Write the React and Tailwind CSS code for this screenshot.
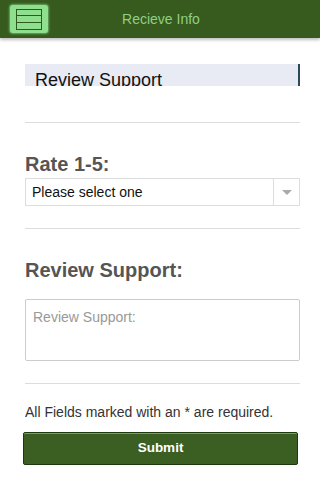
import React from "react";

export default function App() {
  return (
    <div className="w-[320px] h-[480px] bg-white overflow-hidden" style={{ fontFamily: '"Liberation Sans", Arial, sans-serif' }}>
      <div className="relative h-[38px] bg-[#375b1f] flex items-center justify-center shadow-[0_2px_3px_rgba(0,0,0,0.25)]">
        <div className="absolute left-[10px] top-[5px] w-[38px] h-[28px] rounded-[3px] bg-[#8ee08e] shadow-[0_0_2px_1px_rgba(142,224,142,0.6)] flex flex-col items-center justify-center">
          <div className="w-[26px] h-[7px] border-[1.5px] border-[#2f5a1f]" />
          <div className="w-[26px] h-[7px] border-x-[1.5px] border-b-[1.5px] border-[#2f5a1f]" />
          <div className="w-[26px] h-[7px] border-x-[1.5px] border-b-[1.5px] border-[#2f5a1f]" />
        </div>
        <span className="text-[14px] text-[#8fcf84] ml-[2px]">Recieve Info</span>
      </div>

      <div className="ml-[25px] w-[275px] flex flex-col">
        <div className="mt-[26px] h-[22px] bg-[#e8ebf3] border-r-2 border-[#2c4a5a] overflow-hidden pl-[10px] pt-[6px]">
          <div className="text-[18px] leading-[21px] text-[#111]">Review Support</div>
        </div>
        <div className="mt-[36px] h-px bg-[#dcdcdc]" />

        <div className="mt-[30px] text-[20px] leading-[22px] font-bold text-[#555]">Rate 1-5:</div>
        <div className="mt-[3px] h-[28px] border border-[#ddd] flex items-center">
          <span className="flex-1 pl-[6px] text-[14px] text-[#111]">Please select one</span>
          <div className="w-[26px] h-full border-l border-[#ddd] flex items-center justify-center">
            <div className="w-0 h-0 border-l-[5px] border-r-[5px] border-t-[5px] border-l-transparent border-r-transparent border-t-[#aaa]" />
          </div>
        </div>
        <div className="mt-[22px] h-px bg-[#dcdcdc]" />

        <div className="mt-[30px] text-[20px] leading-[22px] font-bold text-[#555]">Review Support:</div>
        <div className="mt-[18px] h-[62px] border border-[#ccc] rounded-[2px] px-[7px] pt-[5px]">
          <span className="text-[14px] text-[#999]">Review Support:</span>
        </div>
        <div className="mt-[22px] h-px bg-[#dcdcdc]" />

        <div className="mt-[20px] text-[14px] leading-[16px] text-[#333]">All Fields marked with an * are required.</div>
      </div>
      <div className="ml-[23px] mt-[12px] w-[275px] h-[33px] bg-[#3b5e22] border border-[#1c3a0e] shadow-[inset_0_1px_0_rgba(255,255,255,0.35)] flex items-center justify-center rounded-[2px]">
        <span className="text-[13.5px] font-bold text-white">Submit</span>
      </div>
    </div>
  );
}
